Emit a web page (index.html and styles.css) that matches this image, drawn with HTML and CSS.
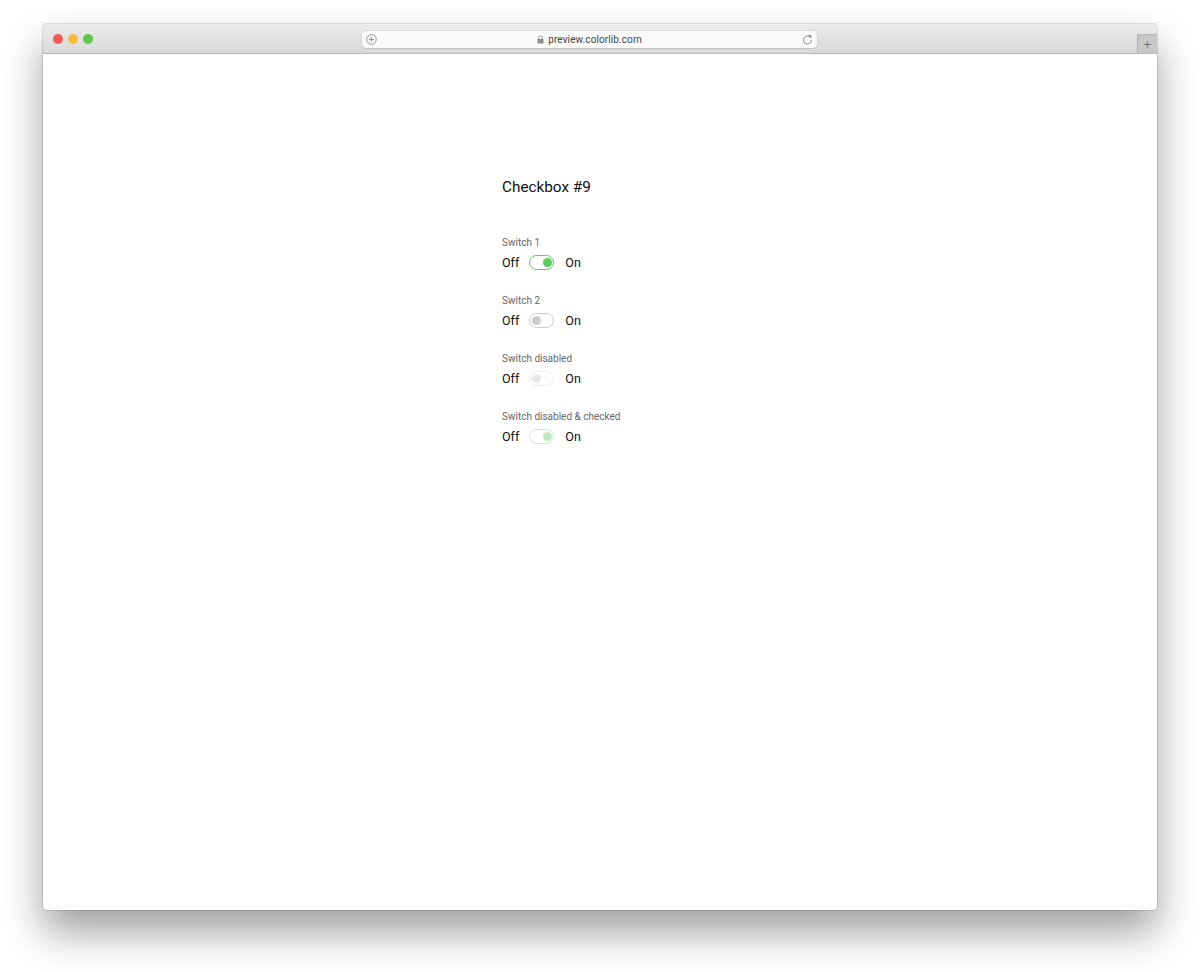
FILE: index.html
```html
<!DOCTYPE html>
<html>
<head>
<meta charset="utf-8">
<title>Checkbox #9</title>
<link rel="stylesheet" href="styles.css">
</head>
<body>
<div class="window">
  <div class="toolbar">
    <div class="lights">
      <span class="light red"></span>
      <span class="light yellow"></span>
      <span class="light green"></span>
    </div>
    <div class="address">
      <svg class="addr-plus" width="11" height="11" viewBox="0 0 11 11"><circle cx="5.5" cy="5.5" r="4.8" fill="none" stroke="#8a8a8a" stroke-width="0.9"/><path d="M5.5 3v5M3 5.5h5" stroke="#8a8a8a" stroke-width="0.9"/></svg>
      <div class="url">
        <svg width="7" height="9" viewBox="0 0 7 9"><path d="M1.6 4V2.8a1.9 1.9 0 0 1 3.8 0V4" fill="none" stroke="#8c8c8c" stroke-width="0.9"/><rect x="0.5" y="4" width="6" height="4.6" rx="0.6" fill="#8c8c8c"/></svg>
        <span>preview.colorlib.com</span>
      </div>
      <svg class="reload" width="11" height="11" viewBox="0 0 11 11"><path d="M8.6 3.6A4 4 0 1 0 9.4 6" fill="none" stroke="#777" stroke-width="0.9"/><path d="M6.4 1.2l2.6 0.6-0.6 2.6" fill="none" stroke="#777" stroke-width="0.9"/></svg>
    </div>
    <div class="newtab"><span>+</span></div>
  </div>
  <div class="content">
    <h1 class="title">Checkbox #9</h1>
    <div class="group">
      <div class="label">Switch 1</div>
      <div class="row"><span>Off</span><span class="switch on"><i></i></span><span>On</span></div>
    </div>
    <div class="group">
      <div class="label">Switch 2</div>
      <div class="row"><span>Off</span><span class="switch off"><i></i></span><span>On</span></div>
    </div>
    <div class="group">
      <div class="label">Switch disabled</div>
      <div class="row"><span>Off</span><span class="switch dis"><i></i></span><span>On</span></div>
    </div>
    <div class="group">
      <div class="label">Switch disabled &amp; checked</div>
      <div class="row"><span>Off</span><span class="switch dis-on"><i></i></span><span>On</span></div>
    </div>
  </div>
</div>
</body>
</html>
```

FILE: styles.css
```css
html, body {
  margin: 0;
  padding: 0;
  background: #ffffff;
}
body {
  font-family: Roboto, "Liberation Sans", sans-serif;
  padding: 24px 43px 0 43px;
  height: 972px;
  box-sizing: border-box;
  overflow: hidden;
}
.window {
  width: 1114px;
  height: 886px;
  background: #fff;
  border-radius: 4px;
  box-shadow: 0 22px 40px rgba(0,0,0,0.38), 0 0 0 1px rgba(0,0,0,0.12);
  overflow: hidden;
  display: flex;
  flex-direction: column;
}
.toolbar {
  flex: none;
  background: linear-gradient(#ececec, #d9d9d9);
  border-bottom: 1px solid #b8b8b8;
  display: flex;
  align-items: center;
  box-sizing: border-box;
  height: 30px;
}
.lights {
  display: flex;
  gap: 5px;
  margin-left: 10px;
  width: 40px;
  margin-top: 1px;
}
.light {
  width: 10px;
  height: 10px;
  border-radius: 50%;
  display: block;
}
.red { background: #ee5b55; }
.yellow { background: #f4bd3a; }
.green { background: #5ec443; }
.address {
  margin-left: 269px;
  width: 455px;
  height: 17px;
  background: #fafafa;
  border-radius: 4px;
  box-shadow: 0 0 0 0.5px rgba(0,0,0,0.12), 0 1px 1px rgba(0,0,0,0.06);
  display: flex;
  align-items: center;
  padding: 0 4px;
  box-sizing: border-box;
  margin-top: 1px;
}
.addr-plus { flex: none; }
.url {
  flex: 1;
  display: flex;
  justify-content: center;
  align-items: center;
  gap: 4px;
  font-size: 10px;
  color: #444;
  letter-spacing: 0.1px;
}
.reload { flex: none; }
.newtab {
  margin-left: 320px;
  width: 20px;
  height: 19px;
  align-self: flex-end;
  background: #c8c8c8;
  border-left: 1px solid #b0b0b0;
  border-top: 1px solid #b8b8b8;
  box-sizing: border-box;
  display: flex;
  align-items: center;
  justify-content: center;
  color: #6e6e6e;
  font-size: 15px;
  font-weight: 300;
  line-height: 1;
}
.content {
  flex: 1;
  padding: 123px 0 0 459px;
}
.title {
  margin: 0;
  font-size: 15.3px;
  font-weight: 400;
  line-height: 20px;
  color: #111;
  margin-bottom: 39px;
}
.group {
  margin-bottom: 22px;
}
.label {
  font-size: 10px;
  line-height: 14px;
  color: #666;
  margin-bottom: 2px;
}
.row {
  display: flex;
  align-items: center;
  height: 20px;
  font-size: 12.5px;
  color: #111;
}
.switch {
  width: 25px;
  height: 15px;
  box-sizing: border-box;
  border-radius: 8px;
  border: 1.5px solid #c9c9c9;
  margin: 0 11px 0 10px;
  display: flex;
  align-items: center;
  padding: 0 1.5px;
}
.switch i {
  display: block;
  width: 9px;
  height: 9px;
  border-radius: 50%;
  background: #cccccc;
}
.switch.on, .switch.dis-on { justify-content: flex-end; }
.switch.on { border-color: #5cc95c; }
.switch.on i { background: #5cc95c; }
.switch.dis { border-color: #ececec; }
.switch.dis i { background: #e8e8e8; }
.switch.dis-on { border-color: #c6eac6; }
.switch.dis-on i { background: #bfe7bf; }
```
